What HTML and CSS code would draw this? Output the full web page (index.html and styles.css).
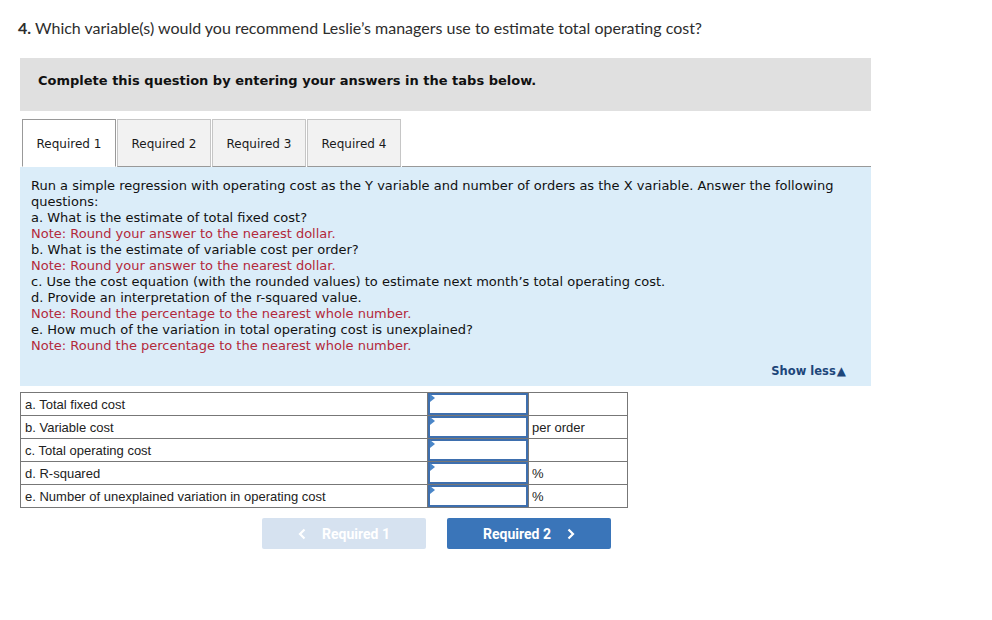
FILE: index.html
```html
<!DOCTYPE html>
<html>
<head>
<meta charset="utf-8">
<link rel="stylesheet" href="styles.css">
</head>
<body>
<div class="page">
  <h1 class="question"><b>4.</b> Which variable(s) would you recommend Leslie’s managers use to estimate total operating cost?</h1>
  <div class="instructions">Complete this question by entering your answers in the tabs below.</div>
  <div class="tabs">
    <div class="tab active">Required 1</div>
    <div class="tab">Required 2</div>
    <div class="tab">Required 3</div>
    <div class="tab">Required 4</div>
    <div class="tab-rest"></div>
  </div>
  <div class="panel">
    <p class="panel-text">Run a simple regression with operating cost as the Y variable and number of orders as the X variable. Answer the following questions:<br>
    a. What is the estimate of total fixed cost?<br>
    <span class="note">Note: Round your answer to the nearest dollar.</span><br>
    b. What is the estimate of variable cost per order?<br>
    <span class="note">Note: Round your answer to the nearest dollar.</span><br>
    c. Use the cost equation (with the rounded values) to estimate next month’s total operating cost.<br>
    d. Provide an interpretation of the r-squared value.<br>
    <span class="note">Note: Round the percentage to the nearest whole number.</span><br>
    e. How much of the variation in total operating cost is unexplained?<br>
    <span class="note">Note: Round the percentage to the nearest whole number.</span></p>
    <div class="show-less">Show less<span class="tri">▲</span></div>
  </div>
  <table class="answers">
    <tr><td class="label">a. Total fixed cost</td><td class="input"><div class="box"><span class="flag"></span></div></td><td class="unit"></td></tr>
    <tr><td class="label">b. Variable cost</td><td class="input"><div class="box"><span class="flag"></span></div></td><td class="unit">per order</td></tr>
    <tr><td class="label">c. Total operating cost</td><td class="input"><div class="box"><span class="flag"></span></div></td><td class="unit"></td></tr>
    <tr><td class="label">d. R-squared</td><td class="input"><div class="box"><span class="flag"></span></div></td><td class="unit">%</td></tr>
    <tr><td class="label">e. Number of unexplained variation in operating cost</td><td class="input"><div class="box"><span class="flag"></span></div></td><td class="unit">%</td></tr>
  </table>
  <div class="nav">
    <div class="btn disabled"><svg class="chev" width="8" height="12" viewBox="0 0 8 12"><path d="M6.5 1.5 L2 6 L6.5 10.5" fill="none" stroke="#fff" stroke-width="2.2"/></svg><span>Required 1</span></div>
    <div class="btn primary"><span>Required 2</span><svg class="chev" width="8" height="12" viewBox="0 0 8 12"><path d="M1.5 1.5 L6 6 L1.5 10.5" fill="none" stroke="#fff" stroke-width="2.2"/></svg></div>
  </div>
</div>
</body>
</html>
```

FILE: styles.css
```css
html, body {
  margin: 0;
  padding: 0;
  background: #fff;
}
.page {
  padding: 18px 0 0 20px;
  width: 851px;
}
.question {
  margin: 0 0 20px -2px;
  font-family: Lato, "Open Sans", sans-serif;
  font-weight: normal;
  font-size: 16px;
  line-height: 20px;
  color: #2d2d2d;
}
.question b {
  font-weight: bold;
}
.instructions {
  height: 53px;
  box-sizing: border-box;
  background: #e0e0e0;
  padding: 15px 0 0 18px;
  font-family: "DejaVu Sans", Verdana, sans-serif;
  font-weight: bold;
  font-size: 13px;
  line-height: 16px;
  color: #111;
}
.tabs {
  display: flex;
  margin-top: 8px;
  padding-left: 2px;
  height: 48px;
}
.tab {
  width: 94px;
  box-sizing: border-box;
  margin-right: 1px;
  border: 1px solid #c6c6c6;
  border-bottom: 1px solid #999;
  background: #f2f2f2;
  font-family: "DejaVu Sans", Verdana, sans-serif;
  font-size: 12px;
  color: #1a1a1a;
  display: flex;
  align-items: center;
  justify-content: center;
  padding-top: 1px;
}
.tab.active {
  background: #fff;
  border-color: #999;
  border-bottom-color: transparent;
}
.tab:last-of-type {
  margin-right: 0;
}
.tab-rest {
  flex: 1;
  border-bottom: 1px solid #999;
}
.panel {
  background: #dbedf9;
  padding: 11px 25px 7px 11px;
}
.panel-text {
  margin: 0;
  font-family: "DejaVu Sans", Verdana, sans-serif;
  font-size: 13px;
  line-height: 16px;
  color: #111;
}
.note {
  color: #b3293b;
}
.show-less {
  text-align: right;
  margin-top: 9px;
  font-family: "DejaVu Sans", Verdana, sans-serif;
  font-weight: bold;
  font-size: 11.5px;
  line-height: 16px;
  color: #1d467a;
}
.tri {
  font-size: 12px;
  margin-left: 1px;
}
.answers {
  margin-top: 6px;
  border-collapse: collapse;
  width: 608px;
  font-family: "Liberation Sans", Arial, sans-serif;
  font-size: 13px;
  color: #222;
}
.answers td {
  border: 1px solid #777;
  height: 22px;
  padding: 0;
}
.answers .label {
  width: 402px;
  padding-left: 4px;
}
.answers .input {
  width: 100px;
  padding: 0;
}
.answers .unit {
  padding-left: 3px;
}
.box {
  position: relative;
  height: 22px;
  box-sizing: border-box;
  border: 2px solid #3e6fae;
  background: #fff;
}
.flag {
  position: absolute;
  left: 0;
  top: -1px;
  width: 0;
  height: 0;
  border-top: 4px solid transparent;
  border-bottom: 4px solid transparent;
  border-left: 5px solid #4a86c8;
}
.nav {
  display: flex;
  gap: 21px;
  margin-top: 10px;
  padding-left: 242px;
}
.btn {
  width: 164px;
  height: 31px;
  border-radius: 2px;
  display: flex;
  align-items: center;
  justify-content: center;
  gap: 16px;
  font-family: Roboto, "Liberation Sans", sans-serif;
  font-weight: bold;
  font-size: 14px;
  color: #fff;
}
.btn.disabled {
  background: #d6e2f0;
}
.btn.primary {
  background: #3a75b9;
}
```
